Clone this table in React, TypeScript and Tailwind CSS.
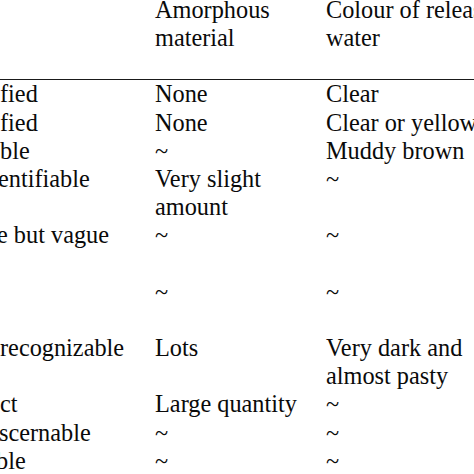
const rows: { a: string[]; b: string[]; c: string[]; shift?: string }[] = [
  { a: ["fied"], b: ["None"], c: ["Clear"] },
  { a: ["fied"], b: ["None"], c: ["Clear or yellowish"] },
  { a: ["ble"], b: ["~"], c: ["Muddy brown"] },
  { a: ["entifiable"], b: ["Very slight", "amount"], c: ["~"], shift: "-ml-[2px]" },
  { a: ["e but vague", ""], b: ["~", ""], c: ["~", ""], shift: "-ml-[3px]" },
  { a: ["", ""], b: ["~", ""], c: ["~", ""] },
  { a: ["recognizable"], b: ["Lots"], c: ["Very dark and", "almost pasty"] },
  { a: ["ct"], b: ["Large quantity"], c: ["~"] },
  { a: ["scernable"], b: ["~"], c: ["~"], shift: "-ml-[1px]" },
  { a: ["ble"], b: ["~"], c: ["~"], shift: "-ml-[4px]" },
]

function Cell({ lines, className = "" }: { lines: string[]; className?: string }) {
  return (
    <div className={className}>
      {lines.map((l, i) => (
        <div key={i} className="h-[28.2px]">
          {l}
        </div>
      ))}
    </div>
  )
}

export default function App() {
  return (
    <div className="h-[474px] w-[474px] overflow-hidden bg-white font-['Liberation_Serif','Times_New_Roman',serif] text-[24.3px] leading-[28.2px] text-[#0a0a0a] whitespace-nowrap">
      <div className="-mt-[4px] grid grid-cols-[155px_171px_1fr]">
        <div className="col-span-3 grid grid-cols-[155px_171px_1fr] border-b-[1.5px] border-[#1a1a1a] pb-[27px]">
          <div />
          <Cell lines={["Amorphous", "material"]} />
          <Cell lines={["Colour of released", "water"]} />
        </div>
        {rows.map((r, i) => (
          <div key={i} className="col-span-3 grid grid-cols-[155px_171px_1fr]">
            <Cell lines={r.a} className={r.shift ?? ""} />
            <Cell lines={r.b} />
            <Cell lines={r.c} />
          </div>
        ))}
      </div>
    </div>
  )
}
